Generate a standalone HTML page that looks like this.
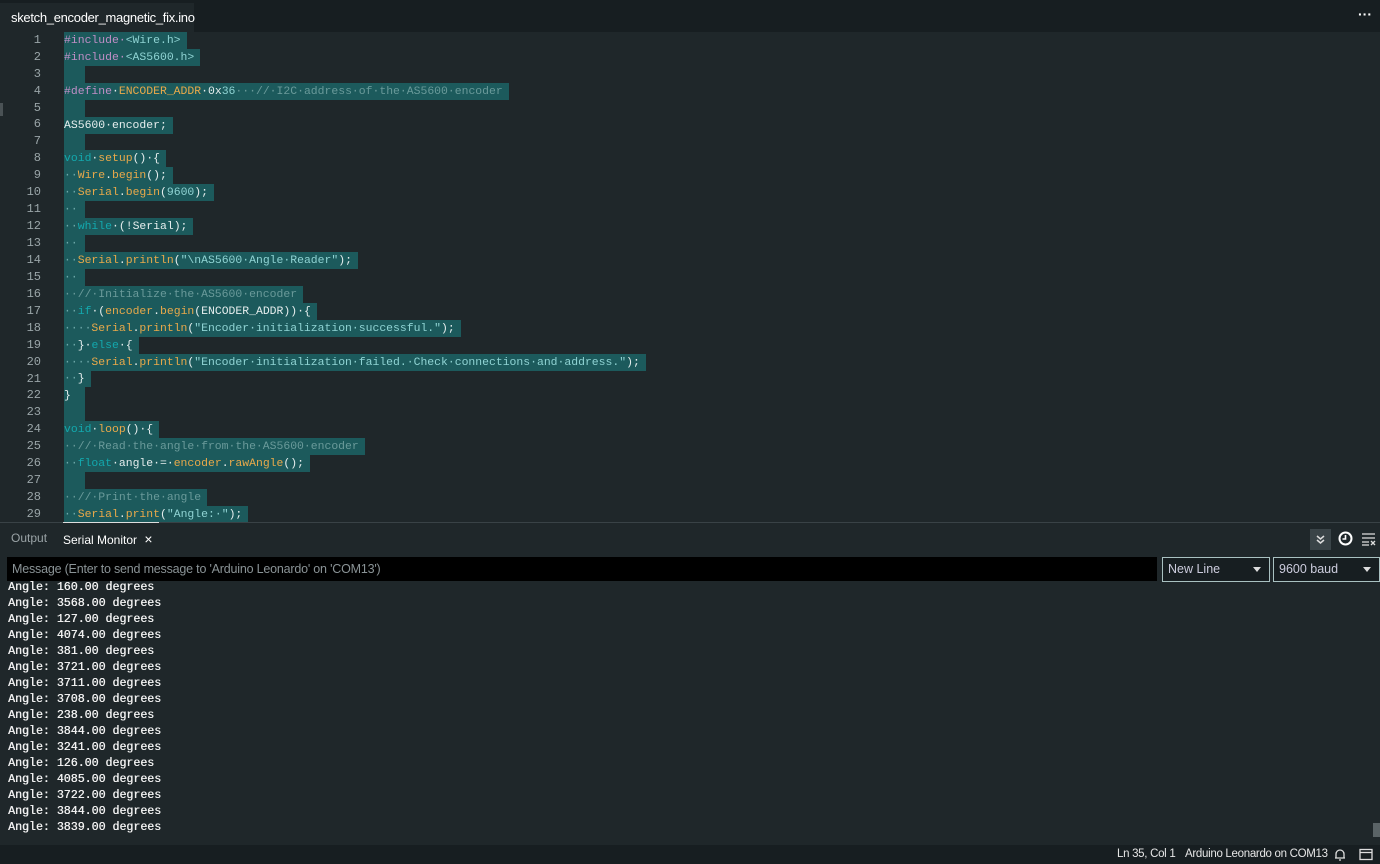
<!DOCTYPE html>
<html><head><style>
*{margin:0;padding:0;box-sizing:border-box}
body{width:1380px;height:864px;background:#1f272a;overflow:hidden;font-family:"Liberation Sans",sans-serif;position:relative}
#tabbar{position:absolute;left:0;top:0;width:1380px;height:32px;background:#171e21}
#tab{position:absolute;left:0;top:3px;width:194px;height:29px;background:#1f272a;color:#fff;font-size:13px;line-height:29px;padding-left:11px;letter-spacing:-0.3px}
#dots{position:absolute;right:8px;top:6px;color:#fff;font-size:14px;font-weight:bold}
#gut{position:absolute;left:0;top:32px;width:50px}
.ln{position:absolute;left:0;width:41px;text-align:right;color:#9aa5a8;font:12px "Liberation Mono",monospace;height:17px;line-height:17px}
#code{position:absolute;left:64px;top:32px;font:11.43px "Liberation Mono",monospace}
.l{height:16.93px;line-height:17px;white-space:pre}
.l span.h{background:#1c5a5c;display:inline-block;padding-right:6px;height:17px;color:#e6eeee;min-width:21px}
.c{color:#6a9a9a}.k{color:#13a8ad}.f{color:#e9a94a}.p{color:#c08ec6}.s{color:#8fd3d3}.d{color:#6fa9aa}
#panel{position:absolute;left:0;top:522px;width:1380px;height:323px;background:#1f272a;border-top:1px solid #394246}
.pt{position:absolute;top:8px;font-size:12px}
#msg{position:absolute;left:7px;top:34px;width:1150px;height:24px;background:#000;color:#8a9396;font-size:12.5px;line-height:24px;padding-left:5px;letter-spacing:-0.2px}
.dd{position:absolute;top:34px;height:25px;border:1px solid #a9c1c1;background:#171e21;color:#ccd;font-size:12.5px;line-height:23px;padding-left:5px}
.dd:after{content:"";position:absolute;right:8px;top:9px;border-left:4px solid transparent;border-right:4px solid transparent;border-top:5px solid #ddd}
#out{position:absolute;left:8px;top:57px;font:11.6px "Liberation Mono",monospace;color:#f0f0f0;line-height:16px;white-space:pre;height:259px;overflow:hidden;width:1300px;text-shadow:0.4px 0 0 #f0f0f0}
#status{position:absolute;left:0;top:845px;width:1380px;height:19px;background:#171e21;color:#e6e6e6;font-size:11.5px;line-height:19px;letter-spacing:-0.3px}
</style></head><body>
<div id="tabbar"><div id="tab">sketch_encoder_magnetic_fix.ino</div><div id="dots">···</div></div>
<div style="position:absolute;left:0;top:103px;width:3px;height:13px;background:#4a5255"></div>
<div id="gut">
<div class="ln" style="top:0">1</div><div class="ln" style="top:17px">2</div><div class="ln" style="top:34px">3</div><div class="ln" style="top:51px">4</div><div class="ln" style="top:68px">5</div><div class="ln" style="top:84px">6</div><div class="ln" style="top:101px">7</div><div class="ln" style="top:118px">8</div><div class="ln" style="top:135px">9</div><div class="ln" style="top:152px">10</div><div class="ln" style="top:169px">11</div><div class="ln" style="top:186px">12</div><div class="ln" style="top:203px">13</div><div class="ln" style="top:220px">14</div><div class="ln" style="top:237px">15</div><div class="ln" style="top:254px">16</div><div class="ln" style="top:271px">17</div><div class="ln" style="top:288px">18</div><div class="ln" style="top:305px">19</div><div class="ln" style="top:322px">20</div><div class="ln" style="top:339px">21</div><div class="ln" style="top:355px">22</div><div class="ln" style="top:372px">23</div><div class="ln" style="top:389px">24</div><div class="ln" style="top:406px">25</div><div class="ln" style="top:423px">26</div><div class="ln" style="top:440px">27</div><div class="ln" style="top:457px">28</div><div class="ln" style="top:474px">29</div>
</div>
<div id="code">
<div class="l"><span class="h"><span class="p">#include·</span><span class="s">&lt;Wire.h&gt;</span></span></div>
<div class="l"><span class="h"><span class="p">#include·</span><span class="s">&lt;AS5600.h&gt;</span></span></div>
<div class="l"><span class="h"> </span></div>
<div class="l"><span class="h"><span class="p">#define</span>·<span class="f">ENCODER_ADDR</span>·0x<span class="s">36</span><span class="c">···//·I2C·address·of·the·AS5600·encoder</span></span></div>
<div class="l"><span class="h"> </span></div>
<div class="l"><span class="h">AS5600·encoder;</span></div>
<div class="l"><span class="h"> </span></div>
<div class="l"><span class="h"><span class="k">void</span>·<span class="f">setup</span>()·{</span></div>
<div class="l"><span class="h"><span class="d">··</span><span class="f">Wire</span>.<span class="f">begin</span>();</span></div>
<div class="l"><span class="h"><span class="d">··</span><span class="f">Serial</span>.<span class="f">begin</span>(<span class="s">9600</span>);</span></div>
<div class="l"><span class="h"><span class="d">··</span></span></div>
<div class="l"><span class="h"><span class="d">··</span><span class="k">while</span>·(!Serial);</span></div>
<div class="l"><span class="h"><span class="d">··</span></span></div>
<div class="l"><span class="h"><span class="d">··</span><span class="f">Serial</span>.<span class="f">println</span>(<span class="s">"\nAS5600·Angle·Reader"</span>);</span></div>
<div class="l"><span class="h"><span class="d">··</span></span></div>
<div class="l"><span class="h"><span class="c">··//·Initialize·the·AS5600·encoder</span></span></div>
<div class="l"><span class="h"><span class="d">··</span><span class="k">if</span>·(<span class="f">encoder</span>.<span class="f">begin</span>(ENCODER_ADDR))·{</span></div>
<div class="l"><span class="h"><span class="d">····</span><span class="f">Serial</span>.<span class="f">println</span>(<span class="s">"Encoder·initialization·successful."</span>);</span></div>
<div class="l"><span class="h"><span class="d">··</span>}·<span class="k">else</span>·{</span></div>
<div class="l"><span class="h"><span class="d">····</span><span class="f">Serial</span>.<span class="f">println</span>(<span class="s">"Encoder·initialization·failed.·Check·connections·and·address."</span>);</span></div>
<div class="l"><span class="h"><span class="d">··</span>}</span></div>
<div class="l"><span class="h">}</span></div>
<div class="l"><span class="h"> </span></div>
<div class="l"><span class="h"><span class="k">void</span>·<span class="f">loop</span>()·{</span></div>
<div class="l"><span class="h"><span class="c">··//·Read·the·angle·from·the·AS5600·encoder</span></span></div>
<div class="l"><span class="h"><span class="d">··</span><span class="k">float</span>·angle·=·<span class="f">encoder</span>.<span class="f">rawAngle</span>();</span></div>
<div class="l"><span class="h"> </span></div>
<div class="l"><span class="h"><span class="c">··//·Print·the·angle</span></span></div>
<div class="l"><span class="h"><span class="d">··</span><span class="f">Serial</span>.<span class="f">print</span>(<span class="s">"Angle:·"</span>);</span></div>
</div>
<div id="panel">
<div class="pt" style="left:11px;color:#9aa3a6">Output</div>
<div class="pt" style="left:63px;color:#fff">Serial Monitor <span style="margin-left:4px;font-size:14px">×</span></div>
<div style="position:absolute;left:63px;top:-1px;width:96px;height:1px;background:#ddd"></div>
<div style="position:absolute;left:1310px;top:6px;width:21px;height:21px;background:#3a4448"><svg width="21" height="21"><path d="M7 7l3.5 3 3.5-3M7 11l3.5 3 3.5-3" stroke="#ddd" stroke-width="1.5" fill="none"/></svg></div>
<svg style="position:absolute;left:1337px;top:7px" width="17" height="17"><circle cx="8.5" cy="8.5" r="6" stroke="#fff" stroke-width="2" fill="none"/><path d="M8.5 5v4h-3" stroke="#fff" stroke-width="1.6" fill="none"/></svg>
<svg style="position:absolute;left:1361px;top:9px" width="16" height="14"><path d="M1 2h13M1 6h13M1 10h7M1 13h7M10 9l4 4M14 9l-4 4" stroke="#ddd" stroke-width="1.3" fill="none"/></svg>
<div id="msg">Message (Enter to send message to 'Arduino Leonardo' on 'COM13')</div>
<div class="dd" style="left:1162px;width:108px">New Line</div>
<div class="dd" style="left:1273px;width:107px">9600 baud</div>
<div id="out">Angle: 160.00 degrees
Angle: 3568.00 degrees
Angle: 127.00 degrees
Angle: 4074.00 degrees
Angle: 381.00 degrees
Angle: 3721.00 degrees
Angle: 3711.00 degrees
Angle: 3708.00 degrees
Angle: 238.00 degrees
Angle: 3844.00 degrees
Angle: 3241.00 degrees
Angle: 126.00 degrees
Angle: 4085.00 degrees
Angle: 3722.00 degrees
Angle: 3844.00 degrees
Angle: 3839.00 degrees</div>
<div style="position:absolute;left:1373px;top:300px;width:7px;height:14px;background:#5a6366"></div>
</div>
<div id="status"><span style="position:absolute;left:1117px">Ln 35, Col 1</span><span style="position:absolute;left:1185px">Arduino Leonardo on COM13</span>
<svg style="position:absolute;left:1334px;top:3px" width="12" height="13"><path d="M2 10V6a4 4 0 0 1 8 0v4zM1 10h10M5 12h2" stroke="#ddd" stroke-width="1.3" fill="none"/></svg>
<svg style="position:absolute;left:1359px;top:3px" width="14" height="13"><rect x="1" y="1.5" width="12" height="10" stroke="#ddd" stroke-width="1.3" fill="none"/><path d="M1 4.5h12" stroke="#ddd" stroke-width="1.3"/></svg></div>
</body></html>
